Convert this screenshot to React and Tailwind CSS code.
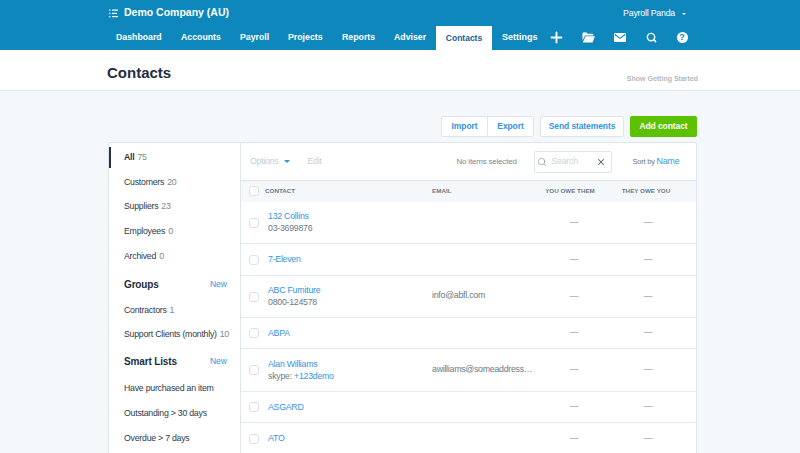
import React from "react";
import { Search, X, Plus } from "lucide-react";

const nav = [["Dashboard","w-[65px]"],["Accounts","w-[59px]"],["Payroll","w-[48px]"],["Projects","w-[54px]"],["Reports","w-[52px]"],["Adviser","w-[42px]"]];

function Side({ label, count, active }) {
  return (
    <div className="h-[24.75px] flex items-center pl-[15px] text-[8.75px] tracking-[-0.24px] text-[#2c3a4d] relative whitespace-nowrap">
      {active && <div className="absolute left-0 top-[2px] bottom-[2px] w-[2px] bg-[#22334a]" />}
      <span className={active ? "font-bold" : ""}>{label}</span>
      {count !== undefined && <span className="ml-[3px] text-[#7b8794]">{count}</span>}
    </div>
  );
}

function SideHead({ label, pad }) {
  return (
    <div className={`h-[29px] flex items-center justify-between pl-[15px] pr-[13px] ${pad}`}>
      <span className="text-[10px] tracking-[-0.15px] font-bold text-[#1f2d3f]">{label}</span>
      <span className="text-[8.5px] text-[#3593e2]">New</span>
    </div>
  );
}

function Box() {
  return <div className="w-[10px] h-[10px] rounded-[3px] border border-[#dbe0e5] bg-white shrink-0" />;
}

function Row({ name, sub, subLink, email, h }) {
  return (
    <div className={`${h} flex items-center border-b border-[#e6ebf0] last:border-b-0 text-[8.75px] tracking-[-0.24px]`}>
      <div className="w-[27px] pl-[8px] shrink-0"><Box /></div>
      <div className="w-[164px] shrink-0 leading-[12px] pb-[1px]">
        <div className="text-[#3593e2]">{name}</div>
        {sub && <div className="text-[#6d7884]">{sub}{subLink && <span className="text-[#3593e2]">{subLink}</span>}</div>}
      </div>
      <div className="w-[106px] shrink-0 text-[#6d7884] whitespace-nowrap pb-[1px]">{email}</div>
      <div className="w-[72px] text-center text-[#7b8794] shrink-0">—</div>
      <div className="w-[76px] text-center text-[#7b8794] shrink-0">—</div>
    </div>
  );
}

export default function App() {
  return (
    <div className="w-[800px] h-[453px] overflow-hidden bg-[#f5f8fb] font-['Liberation_Sans',Arial,sans-serif]">
      <header className="h-[50px] bg-[#0e87bd] pl-[107px] pr-[100px] flex flex-col text-white">
        <div className="h-[26px] flex items-center justify-between">
          <div className="flex items-center pl-[2px]">
            <svg width="9" height="9" viewBox="0 0 9 9" className="mr-[6px]" fill="currentColor">
              <rect x="0" y="0.5" width="1.4" height="1.2" /><rect x="0" y="3.8" width="1.4" height="1.2" /><rect x="0" y="7" width="1.4" height="1.2" />
              <rect x="3" y="0.5" width="6" height="1.2" /><rect x="3" y="3.8" width="5" height="1.2" /><rect x="3" y="7" width="6" height="1.2" />
            </svg>
            <span className="text-[10.5px] font-bold">Demo Company (AU)</span>
          </div>
          <div className="flex items-center pr-[14px] text-[8.75px] tracking-[-0.2px] pt-[1px]">
            <span>Payroll Panda</span>
            <span className="ml-[7px] w-0 h-0 border-x-[2px] border-x-transparent border-t-[2px] border-t-white" />
          </div>
        </div>
        <nav className="h-[24px] flex items-stretch text-[8.75px] font-bold">
          <div className="w-[9px] shrink-0" />
          {nav.map(([n, w]) => (
            <div key={n} className={`${w} shrink-0 flex items-center`}>{n}</div>
          ))}
          <div className="w-[56px] shrink-0 bg-white text-[#15608f] text-[8.5px] flex items-center justify-center">Contacts</div>
          <div className="ml-[10px] w-[35px] shrink-0 flex items-center text-[9px]">Settings</div>
          <div className="ml-[3px] w-[32px] shrink-0 flex items-center justify-center pb-[2px]">
            <Plus size={17} strokeWidth={2.6} />
          </div>
          <div className="w-[32px] shrink-0 flex items-center justify-center pb-[2px]">
            <svg width="13" height="11" viewBox="0 0 13 11" fill="currentColor">
              <path d="M0.5 1.5 C0.5 1 1 0.5 1.5 0.5 H4.5 L5.5 1.7 H10.5 C11 1.7 11.3 2 11.3 2.5 V3.4 H3 L0.5 8.5 Z" />
              <path d="M3.5 4.2 H12.8 L10.6 10.5 H0.8 Z" />
            </svg>
          </div>
          <div className="w-[32px] shrink-0 flex items-center justify-center pb-[2px]">
            <svg width="12" height="9" viewBox="0 0 12 9">
              <rect width="12" height="9" rx="0.8" fill="#fff" />
              <path d="M0.6 1.2 L6 5.4 L11.4 1.2" fill="none" stroke="#0e87bd" strokeWidth="1.1" />
            </svg>
          </div>
          <div className="w-[30px] shrink-0 flex items-center justify-center pb-[2px]">
            <Search size={11} strokeWidth={3.2} />
          </div>
          <div className="w-[32px] shrink-0 flex items-center justify-center pb-[2px]">
            <div className="w-[11px] h-[11px] rounded-full bg-white text-[#0e87bd] text-[9px] leading-[11px] font-bold text-center">?</div>
          </div>
        </nav>
      </header>

      <div className="h-[41px] bg-white border-b border-[#dfe5ec] pl-[107px] pr-[102px] flex items-center justify-between">
        <h1 className="text-[15px] font-bold text-[#1f2d3f] mt-[7px]">Contacts</h1>
        <span className="text-[7px] font-bold text-[#b3b8bd] mt-[18px]">Show Getting Started</span>
      </div>

      <div className="pl-[108px] pr-[103px]">
        <div className="h-[51px] flex items-end justify-end pb-[5px] gap-[6px] text-[8.5px] tracking-[-0.1px] font-bold">
          <div className="h-[21px] flex bg-white border border-[#dfe5ec] rounded-[2px] text-[#3593e2]">
            <div className="w-[46px] flex items-center justify-center border-r border-[#dfe5ec]">Import</div>
            <div className="w-[45px] flex items-center justify-center">Export</div>
          </div>
          <div className="h-[21px] w-[84px] flex items-center justify-center bg-white border border-[#dfe5ec] rounded-[2px] text-[#3593e2]">Send statements</div>
          <div className="h-[21px] w-[67px] flex items-center justify-center bg-[#5cc100] rounded-[2px] text-white">Add contact</div>
        </div>

        <div className="flex h-[320px] bg-white border border-[#dfe5ec] rounded-t-[2px]">
          <aside className="w-[132px] shrink-0 border-r border-[#dfe5ec] pt-[2px]">
            <Side label="All" count="75" active />
            <Side label="Customers" count="20" />
            <Side label="Suppliers" count="23" />
            <Side label="Employees" count="0" />
            <Side label="Archived" count="0" />
            <SideHead label="Groups" pad="pt-[2px]" />
            <Side label="Contractors" count="1" />
            <Side label="Support Clients (monthly)" count="10" />
            <SideHead label="Smart Lists" pad="" />
            <Side label="Have purchased an item" />
            <Side label="Outstanding > 30 days" />
            <Side label="Overdue > 7 days" />
          </aside>
          <main className="flex-1 min-w-0">
            <div className="h-[38px] flex items-center border-b border-[#dfe5ec] whitespace-nowrap">
              <span className="ml-[9px] text-[8.75px] tracking-[-0.24px] text-[#c3cbd3]">Options</span>
              <span className="ml-[6px] w-0 h-0 border-x-[3px] border-x-transparent border-t-[3px] border-t-[#3593e2]" />
              <span className="ml-[17px] w-[14px] text-[8.75px] tracking-[-0.24px] text-[#c3cbd3]">Edit</span>
              <span className="ml-[135px] w-[60px] text-[8px] tracking-[-0.2px] text-[#7b8794]">No items selected</span>
              <div className="ml-[18px] w-[78px] h-[22px] border border-[#dfe5ec] rounded-[2px] flex items-center pl-[2px] pr-[5px] shrink-0">
                <Search size={10} className="text-[#8a95a0]" strokeWidth={1.6} />
                <span className="ml-[4px] text-[8.75px] tracking-[-0.24px] text-[#ccd3da]">Search</span>
                <X size={10} strokeWidth={2.5} className="ml-auto text-[#55606b]" />
              </div>
              <span className="ml-[20px] w-[22px] text-[7.5px] tracking-[-0.2px] text-[#6d7884]">Sort by</span>
              <span className="ml-[2px] text-[8.75px] tracking-[-0.1px] text-[#3593e2]">Name</span>
            </div>
            <div className="h-[21px] bg-[#f5f8fb] flex items-center text-[6.25px] font-bold text-[#6d7884] pb-[1px] whitespace-nowrap">
              <div className="w-[24px] pl-[8px] shrink-0"><Box /></div>
              <div className="w-[167px] shrink-0">CONTACT</div>
              <div className="w-[98px] shrink-0">EMAIL</div>
              <div className="w-[80px] shrink-0 text-center">YOU OWE THEM</div>
              <div className="w-[72px] shrink-0 text-center">THEY OWE YOU</div>
            </div>
            <Row name="132 Collins" sub="03-3699876" h="h-[42px]" />
            <Row name="7-Eleven" h="h-[32px]" />
            <Row name="ABC Furniture" sub="0800-124578" email="info@abfl.com" h="h-[42px]" />
            <Row name="ABPA" h="h-[31px]" />
            <Row name="Alan Williams" sub="skype: " subLink="+123demo" email="awilliams@someaddress…" h="h-[43px]" />
            <Row name="ASGARD" h="h-[31px]" />
            <Row name="ATO" h="h-[31px]" />
          </main>
        </div>
      </div>
    </div>
  );
}
